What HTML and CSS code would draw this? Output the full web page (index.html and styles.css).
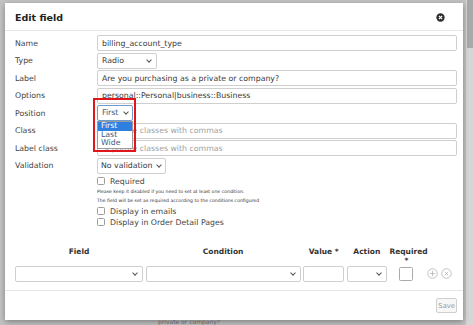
FILE: index.html
```html
<!DOCTYPE html>
<html lang="en">
<head>
    <meta charset="UTF-8">
    <meta name="viewport" content="width=device-width, initial-scale=1.0">
    <title>Edit field</title>
    <link rel="stylesheet" href="styles.css">
</head>
<body>
    <div class="backdrop">
        <div class="behind-text">private or company?</div>
        <div class="scrollbar"><div class="thumb"></div></div>
    </div>

    <div class="modal">
        <div class="modal-header">
            <h1>Edit field</h1>
            <span class="close-btn">
                <svg width="9" height="9" viewBox="0 0 10 10">
                    <circle cx="5" cy="5" r="4.6" fill="#2b2b2b"/>
                    <path d="M3.2 3.2 L6.8 6.8 M6.8 3.2 L3.2 6.8" stroke="#fff" stroke-width="1.4"/>
                </svg>
            </span>
        </div>

        <div class="modal-body">
            <div class="form-grid">
                <label>Name</label>
                <div class="field"><input type="text" value="billing_account_type"></div>

                <label>Type</label>
                <div class="field"><div class="select w-type">Radio<span class="chev"></span></div></div>

                <label>Label</label>
                <div class="field"><input type="text" value="Are you purchasing as a private or company?"></div>

                <label>Options</label>
                <div class="field"><input type="text" value="personal::Personal|business::Business"></div>

                <label>Position</label>
                <div class="field position-field">
                    <div class="select w-pos focused">First<span class="chev"></span></div>
                    <ul class="dropdown">
                        <li class="active">First</li>
                        <li>Last</li>
                        <li>Wide</li>
                    </ul>
                    <div class="highlight-box"></div>
                </div>

                <label>Class</label>
                <div class="field"><input type="text" placeholder="Separate classes with commas"></div>

                <label>Label class</label>
                <div class="field"><input type="text" placeholder="Separate classes with commas"></div>

                <label>Validation</label>
                <div class="field"><div class="select w-valid">No validation<span class="chev"></span></div></div>
            </div>

            <div class="checks">
                <div class="check"><span class="box"></span>Required</div>
                <p class="note">Please keep it disabled if you need to set at least one condition.</p>
                <p class="note">The field will be set as required according to the conditions configured</p>
                <div class="check gap"><span class="box"></span>Display in emails</div>
                <div class="check"><span class="box"></span>Display in Order Detail Pages</div>
            </div>

            <div class="cond-table">
                <div class="th">Field</div>
                <div class="th">Condition</div>
                <div class="th">Value *</div>
                <div class="th">Action</div>
                <div class="th">Required<br>*</div>
                <div class="th"></div>

                <div class="select">&nbsp;<span class="chev"></span></div>
                <div class="select">&nbsp;<span class="chev"></span></div>
                <input type="text">
                <div class="select">&nbsp;<span class="chev"></span></div>
                <div class="td-center"><span class="box big"></span></div>
                <div class="row-actions">
                    <svg width="11" height="11" viewBox="0 0 12 12">
                        <circle cx="6" cy="6" r="5.2" fill="none" stroke="#b5b5b5" stroke-width="0.9"/>
                        <path d="M6 3 V9 M3 6 H9" stroke="#b5b5b5" stroke-width="0.9"/>
                    </svg>
                    <svg width="11" height="11" viewBox="0 0 12 12">
                        <circle cx="6" cy="6" r="5.2" fill="none" stroke="#b5b5b5" stroke-width="0.9"/>
                        <path d="M4 4 L8 8 M8 4 L4 8" stroke="#b5b5b5" stroke-width="0.9"/>
                    </svg>
                </div>
            </div>
        </div>

        <div class="modal-footer">
            <button type="button" disabled>Save</button>
        </div>
    </div>
</body>
</html>
```

FILE: styles.css
```css
* {
    margin: 0;
    padding: 0;
    box-sizing: border-box;
    font-family: 'DejaVu Sans', Verdana, sans-serif;
}

body {
    width: 474px;
    height: 325px;
    overflow: hidden;
    background: #c3c3c3;
    position: relative;
    padding: 3px 0 0 5px;
}

.backdrop {
    position: absolute;
    inset: 0;
}

.behind-text {
    position: absolute;
    left: 158px;
    top: 319px;
    font-size: 6px;
    line-height: 6px;
    color: #777;
}

.scrollbar {
    position: absolute;
    right: 0;
    top: 0;
    width: 8px;
    height: 100%;
    background: #d6d6d6;
}

.scrollbar .thumb {
    height: 48px;
    margin: 0 1px;
    background: #a9a9a9;
}

.modal {
    position: relative;
    width: 458px;
    height: 317px;
    background: #fff;
    box-shadow: 0 2px 6px rgba(0, 0, 0, 0.35);
    display: flex;
    flex-direction: column;
}

.modal-header {
    height: 28px;
    padding: 0 18px 0 10px;
    display: flex;
    align-items: center;
    justify-content: space-between;
    border-bottom: 1px solid #e6e6e6;
}

.modal-header h1 {
    font-size: 9.5px;
    font-weight: bold;
    color: #222;
    padding-top: 2px;
}

.close-btn {
    display: flex;
    padding-top: 2px;
}

.modal-body {
    flex: 1;
    padding: 4px 6px 0 10px;
}

.form-grid {
    display: grid;
    grid-template-columns: 82px 1fr;
    row-gap: 1.5px;
    align-items: center;
}

.form-grid label {
    font-size: 7.8px;
    color: #444;
}

.field {
    height: 16px;
    display: flex;
    align-items: center;
}

input[type="text"] {
    width: 100%;
    height: 16px;
    border: 1px solid #cfcfcf;
    border-radius: 2px;
    padding: 0 4px;
    font-size: 7.8px;
    color: #3a3a3a;
    background: #fff;
    outline: none;
}

input::placeholder {
    color: #a0a0a0;
}

.select {
    position: relative;
    height: 16px;
    line-height: 14px;
    border: 1px solid #cfcfcf;
    border-radius: 2px;
    padding: 0 14px 0 4px;
    font-size: 7.8px;
    color: #3a3a3a;
    background: #fff;
    white-space: nowrap;
}

.chev {
    position: absolute;
    right: 5px;
    top: 4px;
    width: 4px;
    height: 4px;
    border-right: 1px solid #555;
    border-bottom: 1px solid #555;
    transform: rotate(45deg);
}

.w-type { width: 60px; }
.w-pos { width: 36px; padding-right: 10px; }
.w-valid { padding: 0 13px 0 3px; }

.w-pos .chev,
.w-valid .chev { right: 4px; }

.select.focused {
    border-color: #6d9bd0;
    color: #3b5a80;
}

.position-field {
    position: relative;
}

.dropdown {
    position: absolute;
    left: 0;
    top: 16px;
    width: 36px;
    list-style: none;
    background: #fff;
    border: 1px solid #9a9a9a;
    z-index: 2;
}

.dropdown li {
    font-size: 7.8px;
    line-height: 8.6px;
    padding-left: 3px;
    color: #3b5a80;
}

.dropdown li.active {
    background: #2f7fe0;
    color: #fff;
}

.highlight-box {
    position: absolute;
    left: -4px;
    top: -7px;
    width: 43px;
    height: 54px;
    border: 2.5px solid #e0161a;
    z-index: 3;
}

.checks {
    margin-left: 82px;
    padding-top: 2px;
}

.check {
    display: flex;
    align-items: center;
    font-size: 7.8px;
    color: #444;
    height: 11px;
}

.check.gap {
    margin-top: 1px;
}

.box {
    display: inline-block;
    width: 8px;
    height: 8px;
    border: 1px solid #9c9c9c;
    border-radius: 1.5px;
    margin-right: 5px;
    background: #fff;
}

.box.big {
    width: 14px;
    height: 14px;
    margin: 0;
    border-color: #aaa;
}

.note {
    font-size: 4.6px;
    color: #333;
    line-height: 9px;
}

.cond-table {
    margin-top: 16px;
    display: grid;
    grid-template-columns: 128px 155px 41px 40px 34px 1fr;
    column-gap: 2.6px;
    align-items: center;
}

.th {
    font-size: 7.5px;
    font-weight: bold;
    color: #333;
    text-align: center;
    line-height: 9px;
    height: 22px;
    padding-top: 3px;
}

.td-center {
    display: flex;
    justify-content: center;
}

.cond-table .select,
.cond-table input {
    height: 16px;
}

.row-actions {
    display: flex;
    gap: 3px;
    padding-left: 1px;
}

.modal-footer {
    height: 30px;
    border-top: 1px solid #e6e6e6;
    display: flex;
    justify-content: flex-end;
    align-items: center;
    padding: 0 6px 0 0;
}

.modal-footer button {
    height: 15px;
    padding: 0 1px;
    font-size: 6.8px;
    color: #9a9a9a;
    background: #f7f7f7;
    border: 1px solid #cfcfcf;
    border-radius: 2px;
}
```
